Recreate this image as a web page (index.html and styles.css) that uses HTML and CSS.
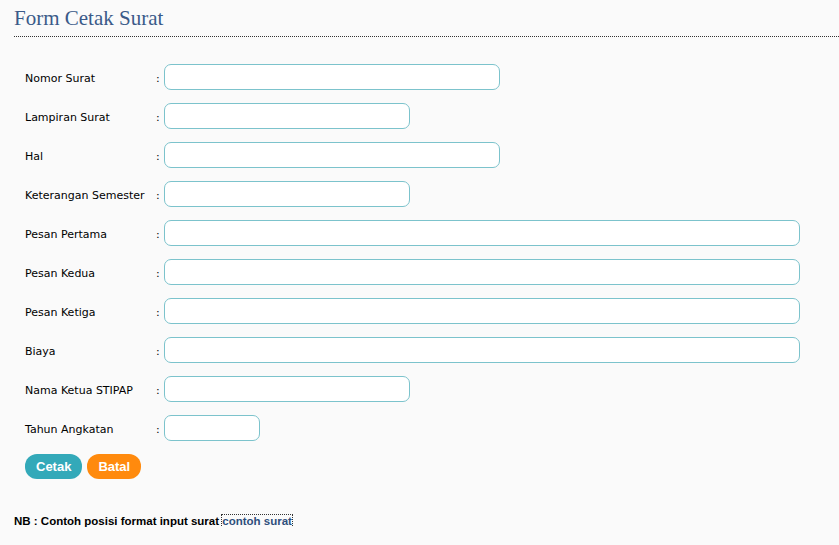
FILE: index.html
```html
<!DOCTYPE html>
<html lang="id">
<head>
    <meta charset="UTF-8">
    <meta name="viewport" content="width=device-width, initial-scale=1.0">
    <title>Form Cetak Surat</title>
    <link rel="stylesheet" href="styles.css">
</head>
<body>

    <div class="judul">
        <h2>Form Cetak Surat</h2>
    </div>

    <!-- Form cetak surat -->
    <form class="form-cetak" action="cetak_surat.php" method="POST">
        <div class="baris">
            <label for="nomor">Nomor Surat</label>
            <span class="titik">:</span>
            <input type="text" id="nomor" name="nomor" class="sedang">
        </div>
        <div class="baris">
            <label for="lampiran">Lampiran Surat</label>
            <span class="titik">:</span>
            <input type="text" id="lampiran" name="lampiran" class="pendek">
        </div>
        <div class="baris">
            <label for="hal">Hal</label>
            <span class="titik">:</span>
            <input type="text" id="hal" name="hal" class="sedang">
        </div>
        <div class="baris">
            <label for="semester">Keterangan Semester</label>
            <span class="titik">:</span>
            <input type="text" id="semester" name="semester" class="pendek">
        </div>
        <div class="baris">
            <label for="pesan1">Pesan Pertama</label>
            <span class="titik">:</span>
            <input type="text" id="pesan1" name="pesan1" class="panjang">
        </div>
        <div class="baris">
            <label for="pesan2">Pesan Kedua</label>
            <span class="titik">:</span>
            <input type="text" id="pesan2" name="pesan2" class="panjang">
        </div>
        <div class="baris">
            <label for="pesan3">Pesan Ketiga</label>
            <span class="titik">:</span>
            <input type="text" id="pesan3" name="pesan3" class="panjang">
        </div>
        <div class="baris">
            <label for="biaya">Biaya</label>
            <span class="titik">:</span>
            <input type="text" id="biaya" name="biaya" class="panjang">
        </div>
        <div class="baris">
            <label for="ketua">Nama Ketua STIPAP</label>
            <span class="titik">:</span>
            <input type="text" id="ketua" name="ketua" class="pendek">
        </div>
        <div class="baris">
            <label for="angkatan">Tahun Angkatan</label>
            <span class="titik">:</span>
            <input type="text" id="angkatan" name="angkatan" class="mini">
        </div>

        <div class="tombol">
            <button type="submit" class="btn btn-cetak">Cetak</button>
            <button type="reset" class="btn btn-batal">Batal</button>
        </div>
    </form>

    <p class="catatan">NB : Contoh posisi format input surat <a href="#">contoh surat</a></p>

</body>
</html>
```

FILE: styles.css
```css
/* Umum */
body {
    margin: 0;
    background-color: #fafafa;
    color: #000;
    font-family: "DejaVu Sans", Verdana, sans-serif;
    font-size: 11px;
}

.judul {
    margin-left: 14px;
    border-bottom: 1px dotted #333;
}

.judul h2 {
    margin: 0;
    padding: 6px 0 6px 0;
    line-height: 24px;
    font-family: "Liberation Serif", Georgia, serif;
    font-weight: normal;
    font-size: 21px;
    color: #3b5a89;
}

/* Form */
.form-cetak {
    padding: 27px 0 0 25px;
}

.baris {
    display: flex;
    align-items: center;
    margin-bottom: 13px;
}

.baris label {
    width: 131px;
    padding-top: 2px;
}

.titik {
    width: 8px;
    padding-top: 2px;
}

.baris input {
    box-sizing: border-box;
    height: 26px;
    border: 1px solid #7cc3cc;
    border-radius: 7px;
    background-color: #fff;
    padding: 0 6px;
}

.baris input.panjang { width: 636px; }
.baris input.sedang { width: 336px; }
.baris input.pendek { width: 246px; }
.baris input.mini { width: 96px; }

/* Tombol */
.tombol {
    display: flex;
    gap: 5px;
}

.btn {
    height: 25px;
    border: none;
    border-radius: 12px;
    padding: 0 11px;
    color: #fff;
    font-family: "Liberation Sans", Arial, sans-serif;
    font-weight: bold;
    font-size: 13px;
    cursor: pointer;
}

.btn-cetak { background-color: #33a9b9; }
.btn-batal { background-color: #ff8a0d; }

.catatan {
    margin: 36px 0 0 14px;
    font-family: "Liberation Sans", Arial, sans-serif;
    font-weight: bold;
    font-size: 11.5px;
}

.catatan a {
    color: #2e4f7c;
    text-decoration: none;
    outline: 1px dotted #333;
}
```
